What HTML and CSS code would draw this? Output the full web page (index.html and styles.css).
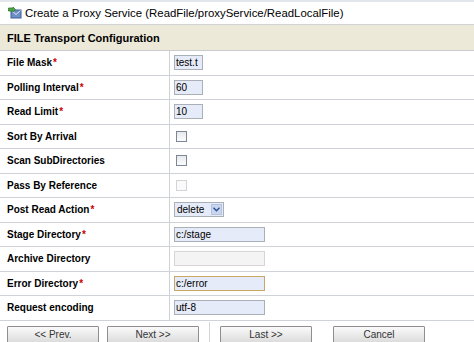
FILE: index.html
```html
<!DOCTYPE html>
<html lang="en">
<head>
    <meta charset="UTF-8">
    <title>Create a Proxy Service</title>
    <link rel="stylesheet" href="styles.css">
</head>
<body>
    <div class="page">
        <div class="title">
            <svg class="icon" width="14" height="12" viewBox="0 0 14 12">
                <rect x="3" y="3" width="10" height="8" fill="#6d8fc4" stroke="#3b5f99"/>
                <path d="M3.5 3.5 L8 7.5 L12.5 3.5" fill="none" stroke="#dfe8f6" stroke-width="1"/>
                <path d="M0.5 1 L5 1 L5 0 L7.5 2.5 L5 5 L5 4 L0.5 4 Z" fill="#4fa34a" stroke="#2e7a2a" stroke-width="0.8"/>
            </svg>
            <span>Create a Proxy Service (ReadFile/proxyService/ReadLocalFile)</span>
        </div>
        <div class="section-head">FILE Transport Configuration</div>

        <div class="form">
            <div class="row">
                <div class="label">File Mask<span class="req">*</span></div>
                <div class="value"><span class="field w28">test.t</span></div>
            </div>
            <div class="row">
                <div class="label">Polling Interval<span class="req">*</span></div>
                <div class="value"><span class="field w28">60</span></div>
            </div>
            <div class="row">
                <div class="label">Read Limit<span class="req">*</span></div>
                <div class="value"><span class="field w28">10</span></div>
            </div>
            <div class="row">
                <div class="label">Sort By Arrival</div>
                <div class="value"><span class="check"></span></div>
            </div>
            <div class="row">
                <div class="label">Scan SubDirectories</div>
                <div class="value"><span class="check"></span></div>
            </div>
            <div class="row">
                <div class="label">Pass By Reference</div>
                <div class="value"><span class="check disabled"></span></div>
            </div>
            <div class="row">
                <div class="label">Post Read Action<span class="req">*</span></div>
                <div class="value">
                    <span class="select">delete
                        <span class="arrow">
                            <svg width="7" height="5" viewBox="0 0 7 5"><path d="M0.5 0.8 L3.5 3.8 L6.5 0.8" fill="none" stroke="#2c4f8c" stroke-width="1.4"/></svg>
                        </span>
                    </span>
                </div>
            </div>
            <div class="row">
                <div class="label">Stage Directory<span class="req">*</span></div>
                <div class="value"><span class="field w90">c:/stage</span></div>
            </div>
            <div class="row">
                <div class="label">Archive Directory</div>
                <div class="value"><span class="field w90 off"></span></div>
            </div>
            <div class="row">
                <div class="label">Error Directory<span class="req">*</span></div>
                <div class="value"><span class="field w90 focus">c:/error</span></div>
            </div>
            <div class="row">
                <div class="label">Request encoding</div>
                <div class="value"><span class="field w90">utf-8</span></div>
            </div>
        </div>

        <div class="buttons">
            <button class="btn">&lt;&lt; Prev.</button>
            <button class="btn">Next &gt;&gt;</button>
            <span class="sep"></span>
            <button class="btn">Last &gt;&gt;</button>
            <button class="btn cancel">Cancel</button>
        </div>
    </div>
</body>
</html>
```

FILE: styles.css
```css
body {
    margin: 0;
    background: #ffffff;
    font-family: "Liberation Sans", Arial, sans-serif;
    color: #000;
}

.page {
    width: 474px;
    height: 342px;
    overflow: hidden;
    border-top: 2px solid #e3e6ea;
}

.title {
    height: 22px;
    display: flex;
    align-items: center;
    padding-left: 8px;
    font-size: 11.4px;
    border-bottom: 1px solid #cfd2d6;
}

.title .icon {
    margin-right: 3px;
}

.section-head {
    height: 25px;
    line-height: 26px;
    padding-left: 7px;
    background-color: #ece9d8;
    font-size: 11px;
    font-weight: bold;
    border-bottom: 1px solid #c9cbcf;
}

.row {
    display: flex;
    height: 23.5px;
    border-bottom: 1px solid #cfd2d6;
}

.label {
    width: 162px;
    padding-left: 7px;
    border-right: 1px solid #cfd2d6;
    display: flex;
    align-items: center;
    font-size: 10px;
    font-weight: bold;
}

.req {
    color: #cc0000;
    margin-left: 1px;
}

.value {
    display: flex;
    align-items: center;
    padding-left: 4px;
}

.field {
    display: block;
    height: 13px;
    line-height: 13px;
    padding-left: 1px;
    overflow: hidden;
    white-space: nowrap;
    font-size: 10px;
    background-color: #e5ebf8;
    border: 1px solid #a9b0b8;
}

.w28 {
    width: 26px;
}

.w90 {
    width: 88px;
}

.field.off {
    background-color: #f4f4f4;
    border-color: #d6d6d6;
}

.field.focus {
    border-color: #c9a867;
}

.check {
    display: block;
    width: 9px;
    height: 9px;
    margin-left: 2px;
    border: 1px solid #7b8894;
    background: linear-gradient(#e6e9ee, #fbfbfc);
}

.check.disabled {
    border-color: #d2d4d7;
    background: #fafafa;
}

.select {
    display: flex;
    align-items: center;
    justify-content: space-between;
    width: 46px;
    height: 13px;
    padding-left: 2px;
    font-size: 10px;
    background-color: #e5ebf8;
    border: 1px solid #a9b0b8;
}

.arrow {
    display: flex;
    align-items: center;
    justify-content: center;
    width: 11px;
    height: 11px;
    margin-right: 1px;
    background-color: #c9d6f0;
    border: 1px solid #b5c3df;
    box-sizing: border-box;
}

.buttons {
    display: flex;
    align-items: flex-start;
    padding: 5px 0 0 7px;
    height: 20px;
}

.btn {
    width: 92px;
    height: 17px;
    margin-right: 8px;
    padding: 0;
    font-family: "Liberation Sans", Arial, sans-serif;
    font-size: 10px;
    color: #333;
    background: linear-gradient(#fafafa, #dcdcdc);
    border: 1px solid #8e8e8e;
    border-radius: 1px;
}

.sep {
    width: 1px;
    height: 20px;
    margin: -4px 10px 0 2px;
    background-color: #d4d6d9;
}

.btn.cancel {
    margin-left: 13px;
}
```
